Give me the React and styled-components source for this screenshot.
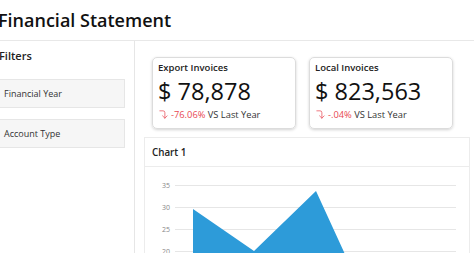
import React from "react";
import styled, { createGlobalStyle } from "styled-components";
import { CornerRightDown } from "lucide-react";

const GlobalStyle = createGlobalStyle`
  html, body {
    margin: 0;
    padding: 0;
    background: #fff;
    overflow: hidden;
  }
  body {
    font-family: "Open Sans", "Noto Sans", sans-serif;
    color: #222;
  }
`;

const Page = styled.div`
  width: 480px;
  margin-left: -3px;
`;

const Header = styled.header`
  height: 40px;
  display: flex;
  align-items: center;
  padding-left: 1px;
  border-bottom: 1px solid #e8e8e8;
  h1 {
    margin: 0;
    font-size: 18px;
    font-weight: 600;
    color: #111;
  }
`;

const Body = styled.div`
  display: grid;
  grid-template-columns: 138px 1fr;
  height: 220px;
`;

const Sidebar = styled.aside`
  border-right: 1px solid #e6e6e6;
  padding: 6px 9px 0 0;
  display: flex;
  flex-direction: column;
  gap: 11px;
`;

const SideTitle = styled.div`
  font-size: 11px;
  font-weight: 600;
  color: #222;
  padding-left: 2px;
  line-height: 18px;
  margin-bottom: 3px;
`;

const FilterBox = styled.div`
  height: 27px;
  background: #f6f6f6;
  border: 1px solid #e6e6e6;
  border-left: none;
  display: flex;
  align-items: center;
  padding-left: 7px;
  font-size: 9px;
  color: #333;
`;

const Main = styled.main`
  padding: 16px 0 0 9px;
  display: flex;
  flex-direction: column;
  gap: 8px;
`;

const CardRow = styled.div`
  display: flex;
  gap: 13px;
  padding-left: 8px;
`;

const Card = styled.div`
  width: 144px;
  height: 72px;
  box-sizing: border-box;
  border: 1px solid #dcdcdc;
  border-radius: 5px;
  box-shadow: 0 1px 3px rgba(0, 0, 0, 0.18);
  padding: 3px 5px;
  display: flex;
  flex-direction: column;
`;

const CardTitle = styled.div`
  font-size: 9.5px;
  font-weight: 600;
  color: #222;
  line-height: 14px;
`;

const CardValue = styled.div`
  font-size: 23.5px;
  color: #111;
  line-height: 32px;
`;

const Delta = styled.div`
  display: flex;
  align-items: center;
  gap: 2px;
  font-size: 9.3px;
  color: #333;
  line-height: 15px;
  span {
    color: #e84752;
  }
  svg {
    color: #e84752;
  }
`;

const ChartCard = styled.div`
  width: 326px;
  flex: 1;
  border: 1px solid #ececec;
  border-bottom: none;
  box-sizing: border-box;
  display: flex;
  flex-direction: column;
`;

const ChartHeader = styled.div`
  height: 28px;
  border-bottom: 1px solid #ececec;
  display: flex;
  align-items: center;
  padding-left: 7px;
  font-size: 9.8px;
  font-weight: 600;
  color: #222;
`;

const Plot = styled.svg`
  display: block;
  text {
    font-family: "Open Sans", sans-serif;
    font-size: 7px;
    fill: #888;
  }
`;

const ticks = [35, 30, 25, 20, 15];

function Chart() {
  return (
    <Plot width="324" height="90">
      {ticks.map((t, i) => (
        <g key={t}>
          <line x1="30" x2="311" y1={18.5 + i * 22} y2={18.5 + i * 22} stroke="#e6e6e6" strokeWidth="1" />
          <text x="25" y={21 + i * 22} textAnchor="end">
            {t}
          </text>
        </g>
      ))}
      <polygon points="48,42 109,84 171,24 232,157 48,157" fill="#2d9bd9" />
    </Plot>
  );
}

function InvoiceCard({ title, value, delta }) {
  return (
    <Card>
      <CardTitle>{title}</CardTitle>
      <CardValue>$ {value}</CardValue>
      <Delta>
        <CornerRightDown size={11} strokeWidth={1.6} />
        <div>
          <span>{delta}</span> VS Last Year
        </div>
      </Delta>
    </Card>
  );
}

export default function App() {
  return (
    <Page>
      <GlobalStyle />
      <Header>
        <h1>Financial Statement</h1>
      </Header>
      <Body>
        <Sidebar>
          <SideTitle>Filters</SideTitle>
          <FilterBox>Financial Year</FilterBox>
          <FilterBox>Account Type</FilterBox>
        </Sidebar>
        <Main>
          <CardRow>
            <InvoiceCard title="Export Invoices" value="78,878" delta="-76.06%" />
            <InvoiceCard title="Local Invoices" value="823,563" delta="-.04%" />
          </CardRow>
          <ChartCard>
            <ChartHeader>Chart 1</ChartHeader>
            <Chart />
          </ChartCard>
        </Main>
      </Body>
    </Page>
  );
}
